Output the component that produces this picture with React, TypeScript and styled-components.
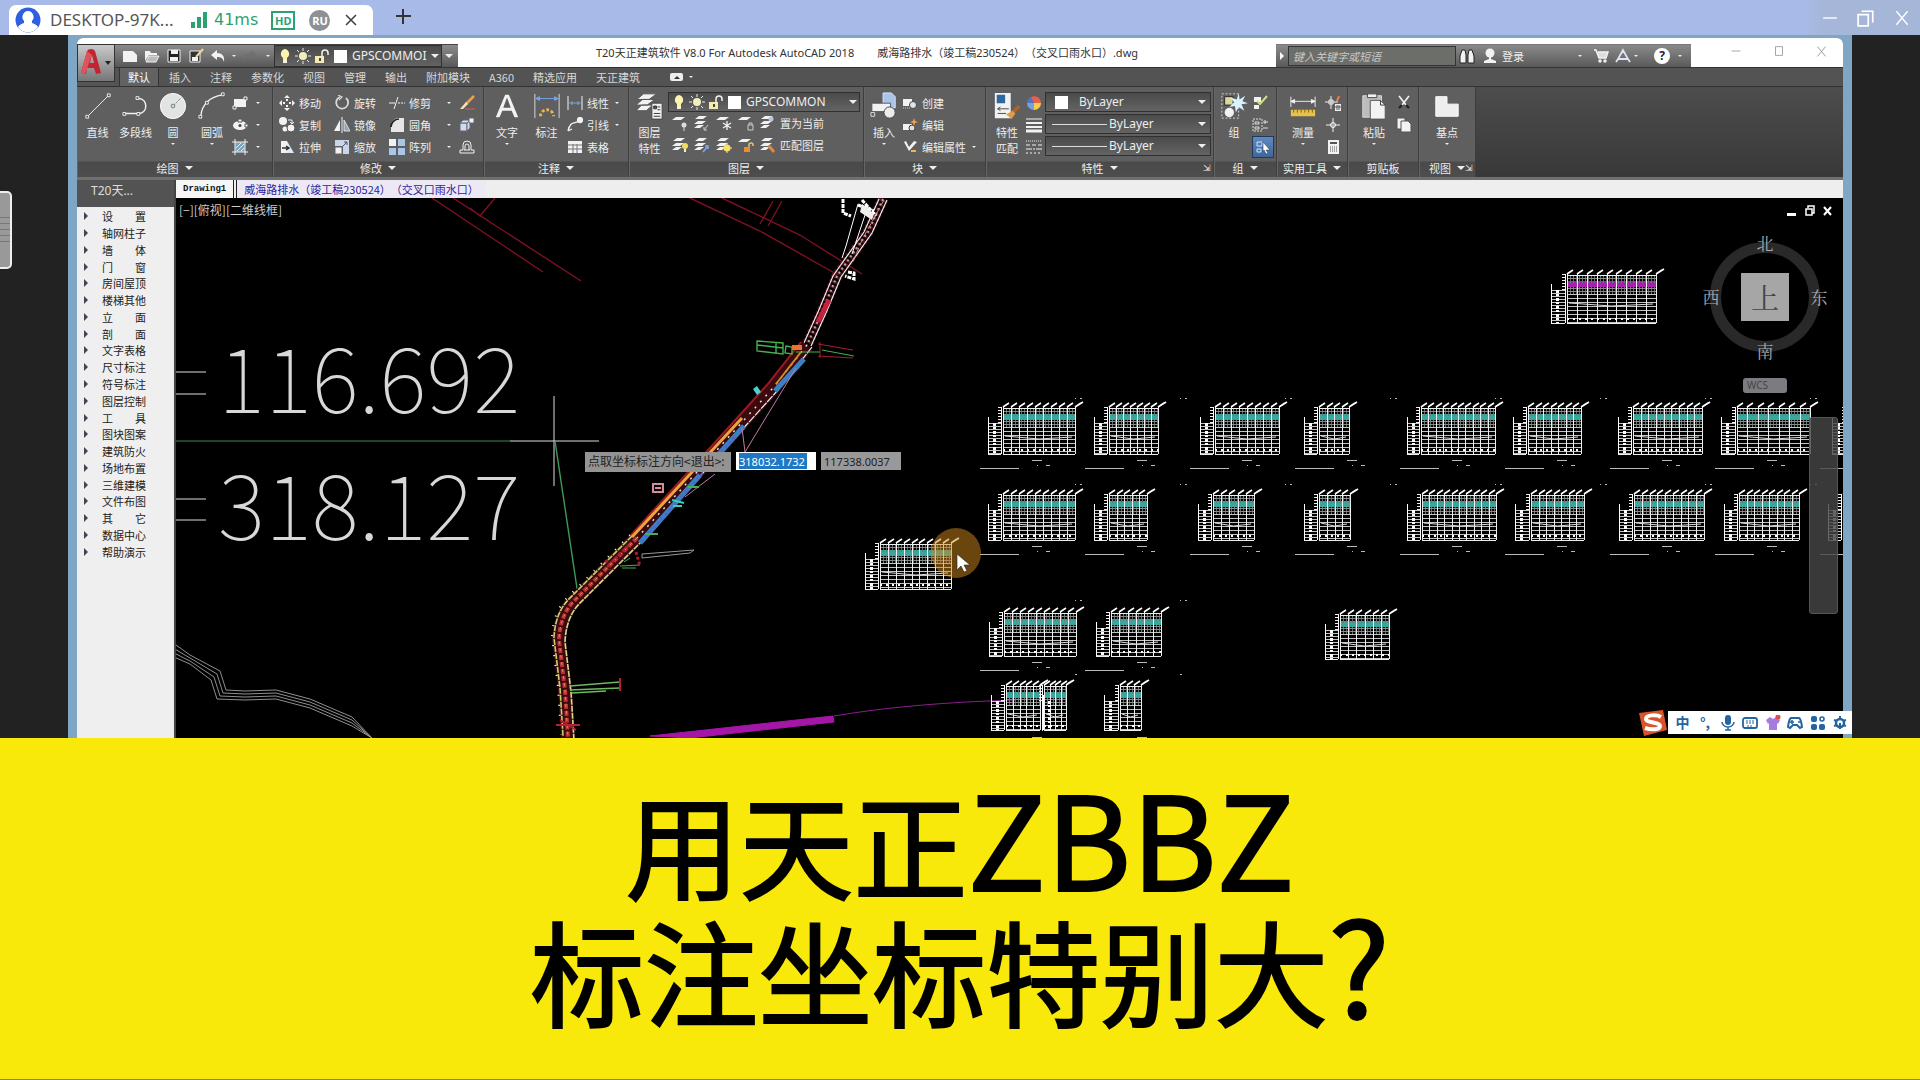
import React from "react";
import styled, { createGlobalStyle, css } from "styled-components";

const ui = `"Noto Sans", "Noto Sans CJK SC", sans-serif`;
const cjk = `"Noto Sans CJK SC", "Noto Sans", sans-serif`;

const Global = createGlobalStyle`
  *, *::before, *::after { box-sizing: border-box; }
  body { margin: 0; background: #222; font-family: ${cjk}; text-spacing-trim: space-all; }
  button, select, input { font: inherit; color: inherit; margin: 0; padding: 0; border: 0; background: none; border-radius: 0; }
  ul, h1, h2, p { margin: 0; padding: 0; list-style: none; font-weight: inherit; font-size: inherit; }
  svg { display: block; flex: none; }
`;

/* ---------- icons ---------- */
const W = "#f2f2f2";
const sheets = (
  <path d="M5 1h8L9 4H1zM4 6h8l-4 3H0zM4 10h6l-4 3H0z" fill={W} />
);
const icons: Record<string, React.ReactNode> = {
  line: <g fill="none" stroke={W}><path d="M4 26 26 4" /><path d="M2 25h3v3h-3zM25 2h3v3h-3z" fill="#555" /></g>,
  pline: <g fill="none" stroke={W}><path d="M3 23h15c10 0 10-16 0-16" strokeWidth="1.5" /><path d="M1 22h3v3h-3zM16 22h3v3h-3zM15 5h3v3h-3z" fill="#555" /></g>,
  circle: <g><circle cx="15" cy="15" r="13.5" fill="#e2e4e4" stroke="#fff" /><path d="M15 15 24 6" stroke="#888" strokeDasharray="3 1" /><circle cx="15" cy="15" r="2" fill="#ddd" stroke="#678" /></g>,
  arc: <g fill="none" stroke={W}><path d="M3 26C4 13 13 5 26 3" strokeWidth="1.4" /><path d="M1 25h3v3h-3zM25 1h3v3h-3zM8 10h3v3h-3z" fill="#555" /></g>,
  rect: <g><path d="M2 4h12v8H2z" fill={W} /><path d="M1 11h3v3h-3zM12 2h3v3h-3z" fill="#555" stroke={W} /></g>,
  ellipse: <g><ellipse cx="8" cy="8.500" rx="7" ry="4.500" fill={W} /><circle cx="8" cy="8.500" r="1.500" fill="#444" /><path d="M6 2h4v3H6zM13 7h3v3h-3z" fill={W} stroke="#555" /></g>,
  hatch: <g><path d="M3 3h10v10H3z" fill="#7fa2bb" /><path d="M3 0v16M13 0v16M0 3h16M0 13h16" stroke={W} /><path d="m4 9 5-5M5 12l7-7M9 12l3-3" stroke="#dfefff" /></g>,
  move: <g fill={W}><path d="M8 0 5 3h6zM8 16l-3-3h6zM0 8l3-3v6zM16 8l-3-3v6zM7 4h2v2H7zM7 10h2v2H7zM4 7h2v2H4zM10 7h2v2h-2z" /></g>,
  copy: <g fill={W}><circle cx="4" cy="4" r="4" /><circle cx="6" cy="12" r="2.500" /><circle cx="12" cy="11" r="4" stroke="#555" /><path d="M9 3h4v3M11 5l2 2 2-2" fill="none" stroke={W} /></g>,
  stretch: <g><path d="M2 2h6v12H2z" fill={W} /><path d="M8 2 15 14H8z" fill="#dfe7f2" /><path d="M3 9h6M7 7l3 2-3 2" stroke="#333" fill="none" strokeWidth="1.500" /></g>,
  rotate: <g fill="none" stroke="#d8d8d8" strokeWidth="1.8"><path d="M12 3a6 6 0 1 1-6-1" /><path d="M4 0l4 2-3 3" strokeWidth="1.2" /></g>,
  mirror: <g><path d="M6 3v11H0z" fill={W} /><path d="M10 3v11h6z" fill="#8fa4b4" stroke={W} strokeWidth="0.8" /><path d="M8 0v16" stroke={W} /></g>,
  scale: <g><path d="M1 1h14v14H9V7H1z" fill="#c9d6ea" /><path d="M1 8h7v7H1z" fill={W} stroke="#666" /><path d="m9 7 4-4M10 3h3v3" stroke="#456" fill="none" /></g>,
  trim: <g stroke={W} fill="none"><path d="M0 8h6M5 14 9 2" /><path d="M9 8h7" strokeDasharray="2 1" /></g>,
  fillet: <g><path d="M2 15V9a8 8 0 0 1 8-8h5v14z" fill="#e6e6e6" /><path d="M2 10a8 8 0 0 1 8-8" stroke="#222" strokeWidth="1.6" fill="none" /></g>,
  array: <g fill="#a9c6e6"><path d="M0 0h7v7H0z" fill={W} /><path d="M9 0h7v7H9zM0 9h7v7H0zM9 9h7v7H9z" /></g>,
  brush: <g><path d="m15 1-8 8" stroke="#e9a24c" strokeWidth="2.5" /><path d="m7 7-6 7h3l5-5z" fill="#f7e3c0" /><path d="M6 14h10" stroke="#e05a4a" /></g>,
  explode: <g fill="#cfdcea" stroke="#667"><path d="M1 6h7v8H1z" /><path d="m1 6 3-3h7l-3 3zM8 6l3-3v8l-3 3z" /><path d="M10 1h5v5h-5z" fill={W} /></g>,
  offset: <g fill="none" stroke={W}><path d="M1 14h14v-3h-3V6a4 4 0 0 0-8 0v5H1z" /><path d="M5 11h6M6 11V7a2 2 0 0 1 4 0v4" /></g>,
  text: <path d="M3 27 13 3h4l10 24h-4l-3-7H10l-3 7zM11 17h8L15 6z" fill={W} />,
  dim: <g><path d="M2 2v26M28 2v26" stroke="#ddd" /><path d="M3 7h24M3 7l4-2v4zM27 7l-4-2v4z" stroke="#79a5e8" fill="#79a5e8" /><path d="M8 26a7 7 0 0 1 14 0" stroke="#f0b450" strokeWidth="3" strokeDasharray="3 2" fill="none" /></g>,
  linear: <g><path d="M1 1v14M15 1v14" stroke={W} /><path d="M2 8h12M5 6v4M11 6v4" stroke="#79a5e8" /></g>,
  leader: <g fill="none" stroke={W} strokeWidth="1.3"><path d="M1 14C4 3 6 8 12 4M1 14l1-4M1 14l4-2" /><circle cx="13" cy="3" r="2.500" fill={W} /></g>,
  table: <g><path d="M1 2h14v12H1z" fill={W} /><path d="M1 6h14M1 10h14M6 5v9M10 5v9" stroke="#777" /></g>,
  layers: <g><path d="M8 2h14l-8 6H1zM7 8h13l-8 6H0zM6 14h12l-7 6H0z" fill={W} stroke="#555" /><path d="M17 12h11v17H17z" fill={W} stroke="#444" /><path d="M19 15h3v3h-3zM23 16h3M23 19h3M19 23h7M19 26h7" stroke="#333" fill="#555" /></g>,
  layOff: <g><path d="M4 2h9L9 5H0z" fill={W} /><circle cx="12" cy="10" r="2.500" fill="#ddd" /><path d="M12 12v4" stroke="#ddd" /></g>,
  layIso: <g>{sheets}<path d="m14 10-4 5M10 12v3h3" stroke="#ccc" fill="none" /></g>,
  layFreeze: <g><path d="M4 2h9L9 5H0z" fill={W} /><path d="M11 6v9M7 8l8 5M15 8l-8 5" stroke={W} strokeWidth="1.3" /></g>,
  layLock: <g><path d="M4 2h9L9 5H0z" fill={W} /><path d="M10 10h5v5h-5zM11 10V8h3v2" stroke="#ccc" fill="none" /></g>,
  layCurrent: <g>{sheets}<circle cx="11" cy="4" r="2.500" fill="#b8c8e0" /></g>,
  layOn: <g>{sheets}<circle cx="13" cy="9" r="3" fill="#f3dc62" /><path d="M13 12v3" stroke="#eee" strokeWidth="2" /></g>,
  layUniso: <g>{sheets}<path d="m9 15 5-6M11 9h3v3" stroke="#7fa8ea" fill="none" strokeWidth="1.500" /></g>,
  layThaw: <g>{sheets}<circle cx="11" cy="11" r="3.500" fill="#f6e26a" /><path d="M11 6v10M6 11h10" stroke="#f6e26a" /></g>,
  layUnlock: <g><path d="M4 2h9L9 5H0z" fill={W} /><path d="M6 10h6v5H6z" fill="#e98f32" /><path d="M11 10V8a2 2 0 0 1 4 0v1" stroke="#f0c060" fill="none" strokeWidth="1.500" /></g>,
  layMatch: <g>{sheets}<path d="m9 9 5 6" stroke="#e08a3c" strokeWidth="3" /></g>,
  bulb: <g><path d="M8 1a5 5 0 0 1 2 9v3H6v-3a5 5 0 0 1 2-9z" fill="#fbf3b0" /><path d="M6 14h4" stroke={W} strokeWidth="2" /></g>,
  sun: <g><circle cx="8" cy="8" r="4" fill="#f3eec0" /><path d="M8 0v3M8 13v3M0 8h3M13 8h3M2 2l2 2M12 12l2 2M2 14l2-2M12 4l2-2" stroke="#eee" /></g>,
  lock: <g><path d="M2 8h9v7H2z" fill="#f3ecb2" /><path d="M9 8V5a3 3 0 0 1 6 0v2" fill="none" stroke={W} strokeWidth="1.5" /><path d="M6 10h2v3H6z" fill="#444" /></g>,
  insert: <g><path d="M14 1h9l4 4v12H14z" fill="#a9c4e8" stroke="#dbe8ff" /><path d="M2 12h20v9H2z" fill={W} stroke="#555" /><circle cx="21" cy="22" r="6" fill="#ececec" stroke="#444" /><path d="M1 22h4v4H1z" fill="none" stroke="#ddd" /></g>,
  create: <g><path d="M1 4h9v7H1z" fill={W} /><circle cx="11" cy="10" r="3.500" fill="#dce4ee" stroke="#444" /><path d="M1 13h8" stroke="#ccc" strokeDasharray="1 1" /></g>,
  edit: <g><path d="M1 7h9v6H1z" fill={W} /><circle cx="10" cy="11" r="3" fill="#ddd" stroke="#444" /><path d="m12 1 1 3 3 1-3 1-1 3-1-3-3-1 3-1z" fill="#ff9c3a" /></g>,
  attr: <g><path d="m2 3 5 9 8-9-3-1-5 6-3-6z" fill={W} /><path d="M9 12h5" stroke="#f0b450" strokeWidth="2" /></g>,
  props: <g><path d="M2 1h17v27H2z" fill={W} /><path d="M4 3h9v9H4z" fill="#2f689c" /><path d="M5 18h12M5 23h9M8 16l-3 2 3 2" stroke="#444" fill="none" /><path d="m28 15-6 6" stroke="#a8642c" strokeWidth="4" /><path d="m14 24 7-4 3 3-4 6z" fill="#e39a45" /></g>,
  wheel: <g><path d="M8 8 1 8a7 7 0 0 1 4-6z" fill="#4a79c4" /><path d="M8 8 5 2a7 7 0 0 1 10 6z" fill="#e8604a" /><path d="M8 8h7a7 7 0 0 1-7 7z" fill="#f3d24a" /><path d="M8 8v7a7 7 0 0 1-7-7z" fill="#7c9de0" /></g>,
  weights: <g stroke={W}><path d="M0 2h16" /><path d="M0 6h16" strokeWidth="2" /><path d="M0 10h16" strokeWidth="2" /><path d="M0 14h16" strokeWidth="3" /></g>,
  types: <g stroke={W}><path d="M0 2h16" strokeDasharray="1 1" /><path d="M0 6h16" strokeDasharray="4 2" /><path d="M0 10h16" strokeDasharray="6 1 2 1" /><path d="M0 14h16" strokeDasharray="2 2" /></g>,
  group: <g><path d="M2 2h18v26H2z" fill="none" stroke="#ddd" strokeDasharray="2 2" /><path d="M5 5h9v9H5z" fill="#d8d8a0" stroke="#222" /><circle cx="10" cy="22" r="5" fill={W} /><path d="m20 1 1 7 6-4-3 6 6 2-7 1 3 7-6-4-3 6-1-7-6 1 5-5-4-5 7 2z" fill="#d8f2ff" /></g>,
  ungroup: <g><path d="M2 2h7v5H2zM2 10h5v4H2z" fill={W} /><path d="m15 1-7 8-3-3" stroke="#d2dc7a" strokeWidth="2" fill="none" /></g>,
  gedit: <g fill="none" stroke="#ddd"><path d="M1 2h9v12H1z" strokeDasharray="2 1" /><path d="M3 5h4v2H3zM3 10h4v2H3zM11 5h5M13 3v4M11 11h5" /></g>,
  gsel: <g><path d="M2 3h5v4H2zM2 10h4v3H2z" fill="none" stroke="#cfe3ff" /><path d="m8 3 7 8h-4l2 3-2 1-2-4-1 2z" fill="#fff" stroke="#345" strokeWidth="0.6" /></g>,
  measure: <g><path d="M2 5v11M28 5v11M2 10h26M2 10l4-2v4zM28 10l-4-2v4z" stroke={W} fill={W} /><path d="M2 19h26v7H2z" fill="#e9c14a" /><path d="M5 19v3M9 19v3M13 19v3M17 19v3M21 19v3M25 19v3" stroke="#7a5a10" /></g>,
  qsel: <g><path d="M6 1v13M0 7h13M4 5h4v4H4z" stroke={W} fill="#555" /><path d="M10 9h6v7h-6z" fill="#eee" /><path d="M12 10v5M14 10v5M10 12h6" stroke="#555" /><path d="m14 1-2 5" stroke="#f08040" strokeWidth="2" /></g>,
  point: <g stroke={W} fill="none"><path d="M8 1v14M1 8h14" /><circle cx="8" cy="8" r="2.500" fill="#aaa" /></g>,
  calc: <g><path d="M3 1h11v14H3z" fill={W} /><path d="M5 3h7v2H5z" fill="#555" /><path d="M5 8h7M5 10h7M5 12h7" stroke="#555" strokeDasharray="1 1" /></g>,
  paste: <g><path d="M3 4h20v23H3z" fill="#bcbcbc" stroke="#ddd" /><path d="M8 2h10v4H8z" fill={W} stroke="#444" /><path d="M11 9h11l5 5v15H11z" fill={W} stroke="#555" /><path d="M22 9v5h5" fill="none" stroke="#333" /></g>,
  cut: <g stroke={W} fill="none" strokeWidth="1.6"><path d="m3 1 7 9M13 1 6 10" /><path d="M10 10l3 3M6 10l-3 3" stroke="#222" strokeWidth="2.4" /></g>,
  pages: <g fill={W} stroke="#555"><path d="M1 1h8v11H1z" /><path d="M5 4h7l3 3v8H5z" /></g>,
  base: <path d="M3 5h12v8h12v13H3z" fill="#eee" stroke="#fff" />,
  neu: <path d="M1 3h10l4 4v7H1z" fill={W} />,
  open: <g fill={W}><path d="M1 3h5l1 2h6v2H5l-4 6z" /><path d="m5 8h10l-3 6H2z" fill="#bbb" stroke={W} /></g>,
  save: <g><path d="M2 2h12v12H2z" fill="#222" stroke={W} /><path d="M5 2h7v4H5zM4 9h8v4H4z" fill={W} /></g>,
  saveas: <g><path d="M2 3h10v11H2z" fill="#333" stroke={W} /><path d="M4 9h6v4H4z" fill={W} /><path d="m15 1-7 8" stroke="#f2d79a" strokeWidth="2" /></g>,
  undo: <path d="M7 2 1 7l6 5V9c4 0 6 1 7 5 1-6-2-9-7-9z" fill={W} />,
  redo: <path d="m9 2 6 5-6 5V9c-4 0-6 1-7 5-1-6 2-9 7-9z" fill="#6f6f6f" />,
  binoc: <g fill={W} stroke="#222"><path d="M1 15V8l2-6h3l1 5v8zM9 15V7l1-5h3l2 6v7z" /></g>,
  user: <g fill={W}><circle cx="8" cy="5" r="4.500" /><path d="M7 8h2v3l5 2v2H2v-2l5-2z" /></g>,
  cart: <g fill="none" stroke={W} strokeWidth="1.500"><path d="M1 2h2l3 8h7l2-6H5" fill="#ddd" /><circle cx="7" cy="13" r="1" /><circle cx="12" cy="13" r="1" /></g>,
  akey: <path d="M8 2 3 11h10zM8 2v3M3 11l-2 3M13 11l2 3" fill="none" stroke="#dfe4f4" strokeWidth="1.8" />,
  min: <path d="M3 8h10" stroke="currentColor" strokeWidth="1" fill="none" />,
  max: <path d="M4 3h8v10H4z" stroke="currentColor" strokeWidth="1" fill="none" />,
  rest: <path d="M1 5h9v10H1zM4 2h10v10" stroke="currentColor" strokeWidth="1.5" fill="none" />,
  x: <path d="m3 2 10 12M13 2 3 14" stroke="currentColor" strokeWidth="1.2" fill="none" />,
};
const Icon = ({ n, s = 16, big }: { n: string; s?: number; big?: boolean }) => (
  <svg width={s} height={s} viewBox={big ? "0 0 30 30" : "0 0 16 16"} aria-hidden="true">{icons[n]}</svg>
);
const Arrow = styled.span<{ $big?: boolean }>`
  flex: none; width: 0; height: 0;
  border: ${(p) => (p.$big ? 4 : 2)}px solid transparent;
  border-top-color: #eee; border-bottom: 0;
`;

/* ---------- remote desktop frame ---------- */
const Page = styled.div`min-height: 100vh; display: flex; flex-direction: column; background: #222;`;
const TopBar = styled.header`
  display: flex; align-items: flex-end; height: 35px; flex: none; padding-left: 9px;
  background: linear-gradient(90deg, #a8bbe8 94%, #a6b6d8 95%);
`;
const SessionTab = styled.div`
  display: flex; align-items: center; width: 364px; height: 30px; padding-left: 6px;
  background: #fff; border-radius: 7px 7px 0 0; color: #555; font: 17px/30px ${ui};
`;
const Host = styled.span`flex: none; width: 150px; padding-left: 9px;`;
const Ping = styled.span`flex: none; display: flex; align-items: center; gap: 6px; width: 80px; color: #2ca271; font: 16px/28px "DejaVu Sans", sans-serif;`;
const Hd = styled.span`padding: 0 2px; border: 2px solid #2ca271; color: #2ca271; font: bold 11px/15px "Noto Sans", sans-serif;`;
const Ru = styled.span`flex: none; margin: 0 3px 0 14px; width: 21px; height: 21px; border-radius: 50%; background: #8d9196; color: #fff; text-align: center; font: bold 11px/21px "Noto Sans", sans-serif;`;
const FrameBtn = styled.button`display: flex; align-items: center; justify-content: center; width: 36px; height: 35px; color: #fff;`;
const AddBtn = styled(FrameBtn)`margin-left: 12px; height: 38px;`;
const Spacer = styled.div`flex: 1;`;

const Stage = styled.main`position: relative; flex: 1; min-height: 0; display: flex; padding: 0 68px; background: #222; overflow: hidden;`;
const Desktop = styled.div`flex: 1; min-width: 0; display: flex; padding: 3px 9px 0; background: #7fa6c4;`;
const Handle = styled.button`
  position: absolute; left: 0; top: 156px; width: 12px; height: 78px; border: 2px solid #eee; border-left: 0; border-radius: 0 5px 5px 0;
  background: repeating-linear-gradient(#777 0 1px, transparent 1px 6px) 0 24px / 100% 28px no-repeat, #999;
`;
const Win = styled.section`flex: 1; min-width: 0; display: flex; flex-direction: column; background: #555; border-radius: 6px 6px 0 0; overflow: hidden; color: #eee; font: 11px/14px ${cjk};`;

/* ---------- title bar ---------- */
const Head = styled.div`display: flex; flex: none; border-bottom: 1px solid #333;`;
const AppCell = styled.div`padding-top: 6px; background: linear-gradient(#fff 6px, #555 6px);`;
const AppBtn = styled.button`
  display: flex; align-items: center; width: 38px; height: 38px; border: 1px solid #333;
  background: linear-gradient(#c9c9c9, #777);
`;
const DarkArrow = styled(Arrow)`border-width: 4px 3px 0; border-top-color: #222;`;
const HeadMain = styled.div`flex: 1; min-width: 0;`;
const TitleRow = styled.div`display: flex; align-items: flex-end; height: 29px; background: #fff;`;
const Quick = styled.div`
  display: flex; align-items: center; height: 23px; width: 343px; padding-left: 4px;
  background: linear-gradient(#8b8b8b, #585858); border-top: 1px solid #444;
`;
const QBtn = styled.button<{ $w?: number }>`display: flex; align-items: center; justify-content: center; width: ${(p) => p.$w || 22}px; height: 22px;`;
const LayerBox = styled.div<{ $w: number; $h: number }>`
  display: flex; align-items: center; gap: 2px; width: ${(p) => p.$w}px; height: ${(p) => p.$h}px; padding: 0 2px;
  border: 1px solid #303030; background: linear-gradient(#4b4b4b, #636363);
`;
const Swatch = styled.span`flex: none; width: 13px; height: 13px; margin: 0 3px; background: #fff;`;
const Combo = styled.select`
  flex: 1; min-width: 0; height: 100%; appearance: none; font: 12px/14px ${ui}; color: #eee; text-overflow: clip;
`;
const Title = styled.h1`flex: 1; display: flex; justify-content: center; gap: 23px; color: #333; font: 11px/28px ${ui}; white-space: nowrap;`;
const Search = styled.div`
  display: flex; align-items: center; width: 415px; height: 23px; background: linear-gradient(#8a8a8a, #5a5a5a); border-top: 1px solid #777;
`;
const SearchArrow = styled.span`width: 0; height: 0; margin: 0 4px; border: 4px solid transparent; border-left-color: #fff; border-right: 0;`;
const SearchInput = styled.input`width: 168px; height: 20px; padding: 0 4px; border: 1px solid #333; background: #6c6e6a; font-style: italic; &::placeholder { color: #c8c8c8; opacity: 1; }`;
const Login = styled.button`display: flex; align-items: center; gap: 4px; width: 104px; padding-left: 4px; margin-right: 8px; & > :last-child { margin-left: auto; }`;
const HelpBtn = styled.button`width: 16px; height: 16px; margin: 0 8px 0 16px; border-radius: 50%; background: #fff; color: #223; font: bold 12px/16px ${ui};`;
const WinBtns = styled.div`display: flex; justify-content: flex-end; gap: 29px; align-items: center; width: 152px; height: 29px; padding: 0 15px 3px 0; color: #999;`;
const MenuRow = styled.nav`display: flex; align-items: flex-end; height: 19px; padding-left: 5px; border-top: 1px solid #333; background: #535353;`;
const MenuTab = styled.button<{ $on?: boolean }>`
  height: 18px; padding: 0 8px; margin-right: 3px; line-height: 16px; color: #d8d8d8; white-space: nowrap;
  ${(p) => p.$on && css`color: #fff; background: #626262; box-shadow: 0 0 0 1px #333;`}
`;
const MenuToggle = styled.button`display: flex; align-items: center; gap: 6px; height: 18px; padding-left: 19px;`;
const Pill = styled.span`display: flex; align-items: center; justify-content: center; width: 13px; height: 8px; border-radius: 2px; background: #eee;`;
const UpTri = styled.span`width: 0; height: 0; border: 3px solid transparent; border-bottom-color: #333; border-top: 0;`;

/* ---------- ribbon ---------- */
const Ribbon = styled.div`display: flex; flex: none; height: 93px; border-bottom: 3px solid #6f6f6f; background: linear-gradient(#4d4d4d, #383838);`;
const PanelBox = styled.section<{ $w: number }>`
  display: flex; flex-direction: column; width: ${(p) => p.$w}px; height: 90px; border-right: 1px solid #3e3e3e; box-shadow: inset 1px 0 #666;
  background: linear-gradient(#5f5f5f 74px, #4a4a4a 75px, #4d4d4d);
`;
const PanelBody = styled.div<{ $pl?: number }>`display: flex; flex: 1; padding: 5px 0 0 ${(p) => p.$pl ?? 4}px;`;
const PanelTitle = styled.button`position: relative; display: flex; align-items: center; justify-content: center; gap: 6px; width: 100%; height: 18px; color: #eee; white-space: nowrap;`;
const Launch = styled.span`position: absolute; right: 2px; top: 2px; font-size: 9px;`;
const Big = styled.button<{ $w: number }>`
  display: flex; flex-direction: column; align-items: center; width: ${(p) => p.$w}px; height: 66px; gap: 3px; line-height: 16px; white-space: pre-line;
  & > svg { margin-bottom: 1px; }
`;
const Col = styled.div<{ $w: number }>`display: flex; flex-direction: column; width: ${(p) => p.$w}px;`;
const Small = styled.button<{ $on?: boolean }>`
  display: flex; align-items: center; gap: 4px; height: 22px; white-space: nowrap;
  & > i { margin-left: auto; margin-right: 8px; }
  ${(p) => p.$on && css`width: 22px; padding-left: 2px; border: 1px solid #223a5a; background: linear-gradient(#5f8ac0, #3f669c);`}
`;
const IconRow = styled.div`display: flex; align-items: center; height: 22px; gap: 6px; padding-left: 4px;`;
const PropSelect = styled.label`
  display: flex; align-items: center; height: 20px; width: 166px; margin-bottom: 2px; padding: 0 4px 0 6px; border: 1px solid #303030;
  background: linear-gradient(#4b4b4b, #636363);
`;
const Rule = styled.span`width: 55px; height: 1px; margin-right: 2px; background: #ddd;`;
const ColourCombo = styled(Combo)`padding-left: 8px;`;

const Panel = ({ w, title, arrow = true, launch, pl, children }: any) => (
  <PanelBox $w={w}>
    <PanelBody $pl={pl}>{children}</PanelBody>
    <PanelTitle>{title}{arrow && <Arrow $big />}{launch && <Launch>⇲</Launch>}</PanelTitle>
  </PanelBox>
);
const BigBtn = ({ n, w, t, a }: { n: string; w: number; t: string; a?: boolean }) => (
  <Big $w={w}><Icon n={n} s={28} big />{t}{a && <Arrow />}</Big>
);
const Cmd = ({ n, t, a, on }: { n: string; t?: string; a?: boolean; on?: boolean }) => (
  <Small $on={on} aria-label={t || n}><Icon n={n} />{t}{a && <Arrow as="i" />}</Small>
);

/* ---------- work area ---------- */
const Work = styled.div`flex: 1; min-height: 0; display: flex;`;
const Palette = styled.aside`flex: none; width: 99px; display: flex; flex-direction: column; border-right: 2px solid #444; background: #efefef; color: #222;`;
const PaletteHead = styled.h2`height: 27px; padding: 0 20px 0 14px; background: #535353; color: #ddd; font: 12px/22px ${ui};`;
const Tree = styled.ul`display: grid; grid-auto-rows: 1fr; height: 352px; margin-top: 1px;`;
const TreeItem = styled.button`
  display: flex; align-items: center; width: 100%; height: 100%; padding-left: 7px; gap: 14px;
  &::before { content: ""; border: 4px solid transparent; border-left-color: #3c4654; border-right: 0; }
`;
const TreeText = styled.span`display: flex; justify-content: space-between; width: 44px; white-space: nowrap;`;
const DocArea = styled.div`flex: 1; min-width: 0; display: flex; flex-direction: column;`;
const DocTabs = styled.div`display: flex; flex: none; height: 18px; background: #eee;`;
const DocTab = styled.button<{ $on?: boolean }>`
  padding: 0 7px; margin-right: 2px; border-right: 1px solid #222; background: #f6f6f6; color: #111; font: bold 9px/16px "Liberation Mono", monospace;
  ${(p) => p.$on && css`border-left: 1px solid #222; border-right: 0; background: #ede9f4; color: #2c1c9c; font: 11px/16px ${cjk};`}
`;
const Canvas = styled.div`position: relative; flex: 1; min-height: 0; overflow: hidden; background: #000;`;
const Drawing = styled.svg`position: absolute; inset: 0; width: 100%; height: 100%;`;
const ViewLabel = styled.div`position: absolute; left: 3px; top: 5px; display: flex; color: #ccc; font-size: 12px;`;
const MdiBtns = styled.div`position: absolute; right: 10px; top: 7px; display: flex; gap: 8px; color: #fff;`;
const Prompt = styled.div`position: absolute; left: 409px; top: 254px; display: flex; align-items: flex-start; gap: 5px; color: #222; font: 12px/18px ${cjk};`;
const PromptText = styled.label`width: 146px; height: 20px; padding-left: 3px; background: #939393; white-space: nowrap; line-height: 18px;`;
const Coord = styled.input<{ $on?: boolean }>`
  width: 80px; height: 18px; border: solid #999; border-width: 1px 9px 1px 3px; background: #999; font: 11px/16px ${ui};
  ${(p) => p.$on && css`border-color: #fff; background: #1f78c4; color: #fff;`}
`;
const Cube = styled.div`
  position: absolute; right: 15px; top: 36px; width: 126px; height: 126px; display: grid; place-items: center;
  grid-template: 18px 1fr 18px / 18px 1fr 18px; color: #aaa; font: 17px/18px "Noto Serif CJK SC", ${cjk};
  &::before { content: ""; position: absolute; inset: 8px; border: 11px solid #292929; border-radius: 50%; }
`;
const Dir = styled.button<{ $a: string }>`position: relative; grid-area: ${(p) => p.$a};`;
const Top = styled.button`position: relative; grid-area: 2 / 2; width: 48px; height: 48px; background: #a6a6a6; color: #444; font-size: 28px;`;
const Wcs = styled.button`position: absolute; right: 56px; top: 180px; width: 44px; height: 15px; padding-left: 4px; border-radius: 3px; background: #7c7c80; color: #444; text-align: left; font: 10px/15px ${ui};`;
const NavBar = styled.div`position: absolute; right: 5px; top: 219px; width: 29px; height: 197px; border: 1px solid #555; border-radius: 3px; background: rgba(70, 70, 70, 0.82);`;
const Ime = styled.div`
  position: absolute; right: 68px; bottom: 4px; display: flex; align-items: center; justify-content: space-between; height: 23px; width: 184px; padding: 0 4px 0 8px; background: #fff;
  color: #2464a0; font: bold 14px/23px ${cjk};
`;
const ImeLogo = styled.svg`margin-left: -38px;`;
const ImeBtn = styled.button`display: flex; align-items: center; justify-content: center; width: 16px; height: 20px;`;
const Banner = styled.footer`
  flex: none; padding: 40px 0 47px; border-bottom: 1px solid #8f8a20; background: #f8e90a; color: #000; text-align: center;
`;
const BannerText = styled.p`
  height: 254px; font: 400 114px/127px ${cjk}; -webkit-text-stroke: 2px #000; stroke-linejoin: round; white-space: nowrap;
`;
const Latin = styled.span`font-size: 130px; line-height: 100px;`;

/* ---------- CAD drawing ---------- */
type P = { h: number; x: number; r: number; t: number; b: number; n: number; band?: string };
const Profile = ({ h, x, r, t, b, n, band = "#3aa79e" }: P) => {
  const step = (r - x) / n;
  let cols = "", slash = "", rows = "", fine = "", side = "", ticks = "";
  for (let i = 0; i <= n; i++) {
    const c = Math.round(x + i * step);
    cols += `M${c} ${t}V${b}`;
    slash += `M${c} ${t}l6 -4`;
  }
  for (let y = t + 20; y <= b; y += 4) rows += `M${x} ${y}H${r}`;
  for (let y = t + 16; y <= b; y += 3) side += `M${h} ${y}H${x - 2}`;
  for (let c = x + 3; c < r; c += 3) fine += `M${c} ${t + 1}V${t + 20}`;
  for (let y = t; y < t + 16; y += 3) ticks += `M${x - 5} ${y}h3`;
  return (
    <g fill="none" shapeRendering="crispEdges">
      <path d={fine} stroke="#686868" />
      <rect x={x} y={t + 7} width={r - x} height="6" fill={band} />
      <path d={fine} stroke="#5f7f7c" strokeDasharray="2 4" />
      <path d={`M${x} ${t + 4}H${r}M${x} ${t + 14}H${r}M${x} ${t + 17}H${r}`} stroke="#8a8a8a" />
      <path d={rows + side} stroke="#c4c4c4" />
      <path d={`M${x} ${t + 1}H${r}M${x} ${b}H${r}M${h} ${b}H${x - 2}` + cols + ticks} stroke="#eee" />
      <path d={`M${h} ${t + 10}V${b}M${x - 2} ${t}V${b}`} stroke="#fff" />
      <path d={`M${h + 6} ${t + 16}V${b}`} stroke="#fff" strokeWidth="3" strokeDasharray="3 1 2 2" />
      <path d={`M${x} ${b - 4}H${r}`} stroke="#fff" strokeWidth="2" strokeDasharray="2 4" />
      <path d={`M${x + 2} ${t + 29}L${(x + r) / 2} ${t + 32}L${r - 3} ${t + 30}`} stroke="#ddd" shapeRendering="auto" />
      <path d={slash + `M${r} ${t}l8 -5`} stroke="#fff" strokeWidth="1.6" shapeRendering="auto" />
    </g>
  );
};
const rowOf = (t: number, b: number, a: number[][]): P[] => a.map(([h, x, r, n]) => ({ h, x, r, n, t, b }));
const profiles: P[] = [
  ...rowOf(407, 454, [[988, 1003, 1075, 9], [1094, 1109, 1158, 7], [1200, 1215, 1279, 8], [1304, 1319, 1349, 4], [1407, 1421, 1495, 10], [1513, 1528, 1581, 7], [1618, 1633, 1702, 9], [1721, 1737, 1810, 7], [1832, 1847, 1900, 6]]),
  ...rowOf(494, 540, [[988, 1003, 1075, 9], [1094, 1109, 1147, 5], [1198, 1213, 1254, 5], [1304, 1319, 1350, 4], [1407, 1422, 1496, 10], [1515, 1531, 1584, 7], [1619, 1634, 1704, 9], [1724, 1739, 1799, 8], [1828, 1843, 1900, 6]]),
  ...rowOf(612, 656, [[989, 1004, 1076, 9], [1096, 1111, 1161, 6]]),
  ...rowOf(614, 659, [[1325, 1340, 1389, 6]]),
  ...rowOf(685, 730, [[991, 1006, 1040, 5], [1104, 1120, 1141, 3]]),
  ...rowOf(543, 589, [[865, 880, 951, 9]]),
  { h: 1551, x: 1567, r: 1656, t: 274, b: 323, n: 9, band: "#a81fb0" },
];
const captions = [
  ...Array.from({ length: 9 }, (_, i) => [980 + i * 105, 468]),
  ...Array.from({ length: 9 }, (_, i) => [980 + i * 105, 554]),
  [980, 670], [1085, 670],
];
const bend = "L573 602Q560 616 559 640L565 690L568 738";
const lower = "M807 345L773 388L707 461L637 538" + bend;
const south = "M637 538" + bend;
const upper = "M883 199L868 232L837 276L822 312L807 345";
const shift = (dx: number, dy: number) => `translate(${dx} ${dy})`;

const CadDrawing = () => (
  <Drawing viewBox="176 198 1667 540" preserveAspectRatio="xMinYMin slice" aria-label="CAD drawing">
    <g fill="none" stroke="#7d1022" strokeWidth="1.4">
      <path d="M432 198L543 272M453 198L581 281M495 198L480 216L470 208M690 198L760 231L838 275M722 198L800 235L862 274M773 201L760 224M782 201L768 226" />
    </g>
    <g fill="none" stroke="#8f8f8f">
      {[0, 3, 6, 9].map((d) => <path key={d} d={`M${176 - d} ${645 + d}L190 ${655 + d}L${220 - d} ${671 + d}L${226 - d} ${690 + d}L245 ${691 + d}L276 ${690 + d}L310 ${699 + d}L352 ${717 + d}L372 738`} />)}
    </g>
    <path d="M176 372H206M176 394H206M176 499H206M176 520H206" stroke="#ddd" />
    <g fill="#d8d8d8" fontFamily="'Noto Sans CJK SC', 'Lato', sans-serif" fontWeight="100" fontSize="90">
      <text x="218" y="413">116.692</text>
      <text x="218" y="540">318.127</text>
    </g>
    <path d="M176 441H510" stroke="#3c8a4c" />
    <path d="M510 441H599M554 396V486" stroke="#ddd" />
    <path d="M555 441L578 595" stroke="#3f9a58" strokeWidth="1.4" fill="none" />

    <g fill="none">
      <path d={upper} stroke="#4a1018" strokeWidth="11" strokeDasharray="3 2" />
      <path d={upper} transform={shift(-4, 0)} stroke="#eee" strokeWidth="1.2" />
      <path d={upper} transform={shift(4, 1)} stroke="#eee" strokeWidth="1.2" />
      <path d={upper} stroke="#aaa" strokeDasharray="2 3" strokeWidth="2" />
      <path d="M829 300L818 322" stroke="#c8203c" strokeWidth="5" />
      <path d="M858 204L846 246L842 258M868 206L852 254" stroke="#fff" />
      <path d="M858 205l16 6M862 200l14 16M843 199v14l8 3M848 272l6 1v6l-9 -3" stroke="#fff" strokeWidth="3" strokeDasharray="4 1" />
      <path d="M862 204l12 10-2 6-12-8z" fill="#eee" />
      <path d="M884 200L862 240L852 264" stroke="#d88" strokeDasharray="6 3" />
      <path d={lower} stroke="#3a0a0e" strokeWidth="14" />
      <path d="M807 345L773 388L707 461L637 538" transform={shift(-6, -3)} stroke="#9a1a24" strokeWidth="2" />
      <path d="M807 345L773 388L707 461L637 538" transform={shift(5, 2)} stroke="#eee" strokeWidth="1.2" strokeDasharray="8 1" />
      <path d="M807 345L773 388L707 461L637 538" stroke="#ddd" strokeWidth="1.5" strokeDasharray="2 6" />
      <path d={south} stroke="#c03038" strokeWidth="4" strokeDasharray="5 2" />
      <path d={south} stroke="#e08a4a" strokeWidth="1" strokeDasharray="3 4" />
      <path d={south} transform={shift(-5, -2)} stroke="#c8d070" strokeWidth="1.6" strokeDasharray="6 1" />
      <path d={south} transform={shift(6, 2)} stroke="#d8d890" strokeWidth="1.6" strokeDasharray="6 1" />
      <path d={south} transform={shift(-7, -3)} stroke="#fff" strokeDasharray="1 9" strokeWidth="2" />
      <path d="M742 418L632 537" stroke="#eda53a" strokeWidth="3" />
      <path d="M801 352L776 384" stroke="#d68a2a" strokeWidth="2" />
      <path d="M804 359L775 391M744 426L718 455M700 475L640 543" stroke="#3a80c4" strokeWidth="5" />
      <path d="M735 437L642 541" stroke="#5a60c8" strokeWidth="2" strokeDasharray="3 3" />
      <path d="M796 368L745 452L742 428M715 474L685 497" stroke="#c47aa4" />
      <path d="M757 341l26 2v11l-26 -3zM757 345l26 3M776 343v10M786 346l6 1v7l-7 -1z" stroke="#46b04c" strokeWidth="1.4" />
      <path d="M792 345h10v5h-10z" fill="#e8752a" />
      <path d="M820 352h-24M822 350l32 6" stroke="#46b04c" />
      <path d="M818 344l35 6M818 356l35 2M820 342v16" stroke="#a81e30" />
      <path d="M753 389l4 -3 4 6-4 3z" fill="#4ad0c8" />
      <path d="M653 484h10v8h-10zM655 488h6" stroke="#d78aa0" strokeWidth="2" />
      <path d="M672 500l12 3M673 506h9" stroke="#3ad0b0" strokeWidth="2" />
      <path d="M688 487h11M645 534h13" stroke="#46b04c" strokeWidth="2" />
      <path d="M642 554L694 550L690 553L642 558z" stroke="#999" />
      <path d="M620 566l20 -1M624 562l6 -4M622 568h14" stroke="#46b04c" />
      <path d="M636 552l4 14M606 560l4 10M628 546l-16 16" stroke="#a81e30" strokeWidth="3" strokeDasharray="3 2" />
      <path d="M570 686L620 682M570 690L620 688M572 693L606 691" stroke="#6cb85c" strokeWidth="1.5" />
      <path d="M620 678v13M556 725h24M560 720l16 10" stroke="#b52030" strokeWidth="2" />
      <path d="M650 736L833 716L834 722L690 738z" stroke="#a416a8" fill="#a416a8" strokeWidth="1" />
      <path d="M834 716Q910 703 1015 700" stroke="#8b1f8f" />
    </g>

    {profiles.map((p, i) => <Profile key={i} {...p} />)}
    <Profile h={1043} x={1044} r={1066} t={685} b={730} n={4} />
    <g fill="none" stroke="#bbb" shapeRendering="crispEdges">
      {captions.map(([x, y], i) => (
        <path key={i} d={`M${x} ${y}h39M${x + 52} ${y - 8}h10M${x + 57} ${y - 3}h1M${x + 66} ${y - 3}h4M${x + 95} ${y - 70}h1M${x + 100} ${y - 70}h2`} />
      ))}
      <path d="M1032 737h10M1137 737h10M1075 674h2M1180 674h2" />
    </g>
    <circle cx="956" cy="553" r="25" fill="#d58a1c" fillOpacity="0.5" />
    <path d="M957 554v16l4 -4 3 6 3 -1 -3 -6h6z" fill="#fff" stroke="#222" strokeWidth="0.6" />
  </Drawing>
);

const menus = ["默认", "插入", "注释", "参数化", "视图", "管理", "输出", "附加模块", "A360", "精选应用", "天正建筑"];
const tree = ["设置", "轴网柱子", "墙体", "门窗", "房间屋顶", "楼梯其他", "立面", "剖面", "文字表格", "尺寸标注", "符号标注", "图层控制", "工具", "图块图案", "建筑防火", "场地布置", "三维建模", "文件布图", "其它", "数据中心", "帮助演示"];
const layerTools: [string, string, string[]][] = [
  ["置为当前", "layCurrent", ["layOff", "layIso", "layFreeze", "layLock"]],
  ["匹配图层", "layMatch", ["layOn", "layUniso", "layThaw", "layUnlock"]],
];

export default function App() {
  return (
    <Page>
      <Global />
      <TopBar>
        <SessionTab>
          <svg width="26" height="26" viewBox="0 0 26 26"><circle cx="13" cy="13" r="12.500" fill="#2f5fe0" /><path d="M13 4a6 6 0 0 1 4 10v2c3 1 5 2 6 4a12 12 0 0 1-20 0c1-2 3-3 6-4v-2a6 6 0 0 1 4-10z" fill="#fff" /></svg>
          <Host>DESKTOP-97K...</Host>
          <Ping><svg width="17" height="16" viewBox="0 0 17 16"><path d="M0 10h4v6H0zM6 5h4v11H6zM12 0h4v16h-4z" fill="#2ca271" /></svg>41ms</Ping>
          <Hd>HD</Hd><Ru>RU</Ru>
          <FrameBtn aria-label="Close session"><svg width="14" height="14"><path d="m2 2 10 10M12 2 2 12" stroke="#444" strokeWidth="1.6" /></svg></FrameBtn>
        </SessionTab>
        <AddBtn aria-label="New session"><svg width="15" height="15"><path d="M7 0v15M0 7h15" stroke="#333" strokeWidth="2" /></svg></AddBtn>
        <Spacer />
        <FrameBtn aria-label="Minimize"><Icon n="min" s={22} /></FrameBtn>
        <FrameBtn aria-label="Restore"><Icon n="rest" s={18} /></FrameBtn>
        <FrameBtn aria-label="Close"><Icon n="x" s={18} /></FrameBtn>
      </TopBar>

      <Stage>
        <Handle aria-label="Toggle toolbar" />
        <Desktop>
          <Win>
            <Head>
              <AppCell>
                <AppBtn aria-label="Application menu">
                  <svg width="27" height="32" viewBox="0 0 27 32"><path d="M3 26 9 4q1-2 4-2t4 2l6 22-5 1-2-6h-7l-1 6zM12 16h4L14 8z" fill="#c22432" /><path d="M9 4 3 26l4 1L14 8z" fill="#e0535c" /></svg>
                  <DarkArrow />
                </AppBtn>
              </AppCell>
              <HeadMain>
                <TitleRow>
                  <Quick>
                    {["neu", "open", "save", "saveas", "undo"].map((n) => <QBtn key={n} aria-label={n}><Icon n={n} /></QBtn>)}
                    <QBtn $w={10} aria-label="Undo list"><Arrow /></QBtn>
                    <QBtn aria-label="Redo"><Icon n="redo" /></QBtn>
                    <QBtn $w={13} aria-label="Redo list"><Arrow /></QBtn>
                    <LayerBox $w={168} $h={22}>
                      <Icon n="bulb" /><Icon n="sun" /><Icon n="lock" /><Swatch />
                      <Combo aria-label="Current layer"><option>GPSCOMMOI</option></Combo><Arrow $big />
                    </LayerBox>
                    <QBtn $w={14} aria-label="Customize"><Arrow $big /></QBtn>
                  </Quick>
                  <Title><span>T20天正建筑软件 V8.0 For Autodesk AutoCAD 2018</span><span>威海路排水（竣工稿230524）（交叉口雨水口）.dwg</span></Title>
                  <Search>
                    <SearchArrow />
                    <SearchInput aria-label="Search" placeholder="键入关键字或短语" />
                    <QBtn aria-label="Find"><Icon n="binoc" /></QBtn>
                    <Login><Icon n="user" />登录<Arrow /></Login>
                    <QBtn aria-label="Store"><Icon n="cart" /></QBtn>
                    <QBtn aria-label="Exchange"><Icon n="akey" /></QBtn>
                    <Arrow />
                    <HelpBtn>?</HelpBtn>
                    <Arrow />
                  </Search>
                  <WinBtns>
                    <button aria-label="Minimize window"><Icon n="min" s={14} /></button>
                    <button aria-label="Maximize window"><Icon n="max" s={14} /></button>
                    <button aria-label="Close window"><Icon n="x" s={13} /></button>
                  </WinBtns>
                </TitleRow>
                <MenuRow>
                  {menus.map((m, i) => <MenuTab key={m} $on={i === 0}>{m}</MenuTab>)}
                  <MenuToggle aria-label="Minimize ribbon"><Pill><UpTri /></Pill><Arrow /></MenuToggle>
                </MenuRow>
              </HeadMain>
            </Head>

            <Ribbon>
              <Panel w={196} title="绘图" pl={1}>
                <BigBtn n="line" w={39} t="直线" /><BigBtn n="pline" w={37} t="多段线" /><BigBtn n="circle" w={38} t="圆" a /><BigBtn n="arc" w={40} t="圆弧" a />
                <Col $w={36}><Cmd n="rect" a /><Cmd n="ellipse" a /><Cmd n="hatch" a /></Col>
              </Panel>
              <Panel w={211} title="修改" pl={6}>
                <Col $w={55}><Cmd n="move" t="移动" /><Cmd n="copy" t="复制" /><Cmd n="stretch" t="拉伸" /></Col>
                <Col $w={55}><Cmd n="rotate" t="旋转" /><Cmd n="mirror" t="镜像" /><Cmd n="scale" t="缩放" /></Col>
                <Col $w={70}><Cmd n="trim" t="修剪" a /><Cmd n="fillet" t="圆角" a /><Cmd n="array" t="阵列" a /></Col>
                <Col $w={20}><Cmd n="brush" /><Cmd n="explode" /><Cmd n="offset" /></Col>
              </Panel>
              <Panel w={145} title="注释">
                <BigBtn n="text" w={38} t="文字" a /><BigBtn n="dim" w={41} t="标注" />
                <Col $w={60}><Cmd n="linear" t="线性" a /><Cmd n="leader" t="引线" a /><Cmd n="table" t="表格" /></Col>
              </Panel>
              <Panel w={235} title="图层" pl={2}>
                <BigBtn n="layers" w={37} t={"图层\n特性"} />
                <Col $w={193}>
                  <LayerBox $w={192} $h={20}>
                    <Icon n="bulb" /><Icon n="sun" /><Icon n="lock" /><Swatch />
                    <Combo aria-label="Layer"><option>GPSCOMMON</option></Combo><Arrow $big />
                  </LayerBox>
                  {layerTools.map(([t, icon, tools]) => (
                    <IconRow key={t}>
                      {tools.map((n) => <Cmd key={n} n={n} />)}
                      <Cmd n={icon} t={t} />
                    </IconRow>
                  ))}
                </Col>
              </Panel>
              <Panel w={122} title="块" pl={2}>
                <BigBtn n="insert" w={36} t="插入" a />
                <Col $w={82}><Cmd n="create" t="创建" /><Cmd n="edit" t="编辑" /><Cmd n="attr" t="编辑属性" a /></Col>
              </Panel>
              <Panel w={228} title="特性" launch pl={2}>
                <BigBtn n="props" w={38} t={"特性\n匹配"} />
                <Col $w={19}><Cmd n="wheel" /><Cmd n="weights" /><Cmd n="types" /></Col>
                <Col $w={167}>
                  <PropSelect><Swatch /><ColourCombo aria-label="Colour"><option>ByLayer</option></ColourCombo><Arrow $big /></PropSelect>
                  <PropSelect><Rule /><Combo aria-label="Lineweight"><option>ByLayer</option></Combo><Arrow $big /></PropSelect>
                  <PropSelect><Rule /><Combo aria-label="Linetype"><option>ByLayer</option></Combo><Arrow $big /></PropSelect>
                </Col>
              </Panel>
              <Panel w={63} title="组" pl={2}>
                <BigBtn n="group" w={36} t="组" />
                <Col $w={22}><Cmd n="ungroup" /><Cmd n="gedit" /><Cmd n="gsel" on /></Col>
              </Panel>
              <Panel w={71} title="实用工具">
                <BigBtn n="measure" w={44} t="测量" a />
                <Col $w={22}><Cmd n="qsel" /><Cmd n="point" /><Cmd n="calc" /></Col>
              </Panel>
              <Panel w={71} title="剪贴板" arrow={false}>
                <BigBtn n="paste" w={44} t="粘贴" a />
                <Col $w={22}><Cmd n="cut" /><Cmd n="pages" /></Col>
              </Panel>
              <Panel w={57} title="视图" launch>
                <BigBtn n="base" w={48} t="基点" a />
              </Panel>
            </Ribbon>

            <Work>
              <Palette>
                <PaletteHead>T20天...</PaletteHead>
                <Tree>
                  {tree.map((t) => (
                    <li key={t}><TreeItem><TreeText>{t.length === 2 ? <><span>{t[0]}</span><span>{t[1]}</span></> : t}</TreeText></TreeItem></li>
                  ))}
                </Tree>
              </Palette>
              <DocArea>
                <DocTabs><DocTab>Drawing1</DocTab><DocTab $on>威海路排水（竣工稿230524）（交叉口雨水口）</DocTab></DocTabs>
                <Canvas>
                  <CadDrawing />
                  <ViewLabel><button>[−]</button><button>[俯视]</button><button>[二维线框]</button></ViewLabel>
                  <MdiBtns>
                    <button aria-label="Minimize drawing"><svg width="10" height="12"><path d="M0 8h9v3H0z" fill="#fff" /></svg></button>
                    <button aria-label="Restore drawing"><svg width="10" height="12"><path d="M1 4h6v6H1zM3 3V1h6v7H7" stroke="#fff" strokeWidth="1.5" fill="none" /></svg></button>
                    <button aria-label="Close drawing"><svg width="10" height="12"><path d="m1 2 7 8M8 2 1 10" stroke="#fff" strokeWidth="2" /></svg></button>
                  </MdiBtns>
                  <Prompt>
                    <PromptText htmlFor="cx">点取坐标标注方向&lt;退出&gt;:</PromptText>
                    <Coord id="cx" $on defaultValue="318032.1732" />
                    <Coord aria-label="Y" defaultValue="117338.0037" />
                  </Prompt>
                  <Cube><Dir $a="1 / 2">北</Dir><Dir $a="2 / 1">西</Dir><Top>上</Top><Dir $a="2 / 3">东</Dir><Dir $a="3 / 2">南</Dir></Cube>
                  <Wcs>WCS</Wcs>
                  <NavBar />
                </Canvas>
              </DocArea>
            </Work>
          </Win>
        </Desktop>
        <Ime>
          <ImeLogo width="30" height="28" viewBox="0 0 30 28"><path d="M1 4 25 1l4 20-23 6z" fill="#d8542a" /><path d="M23 8c-5-3-15-2-15 2s14 3 14 7-9 4-15 2" fill="none" stroke="#fff" strokeWidth="4" /></ImeLogo>
          <ImeBtn>中</ImeBtn>
          <ImeBtn>°,</ImeBtn>
          <ImeBtn aria-label="Voice"><svg width="14" height="16" viewBox="0 0 14 16"><rect x="4" y="0" width="6" height="10" rx="3" fill="#2464a0" /><path d="M1 7a6 5 0 0 0 12 0M7 12v3M4 15h6" fill="none" stroke="#2464a0" strokeWidth="1.5" /></svg></ImeBtn>
          <ImeBtn aria-label="Keyboard"><svg width="16" height="12" viewBox="0 0 16 12"><rect x="1" y="1" width="14" height="10" rx="2" fill="none" stroke="#2464a0" strokeWidth="1.8" /><path d="M4 4h9M4 6h9M5 9h6" stroke="#2464a0" strokeDasharray="2 1" /></svg></ImeBtn>
          <ImeBtn aria-label="Skin"><svg width="16" height="16" viewBox="0 0 16 16"><path d="m1 5 4-3 3 2 3-2 4 3-2 4-1-1v7H4V8L3 9z" fill="#a67ae0" /><circle cx="13" cy="2" r="2.500" fill="#e0504a" /></svg></ImeBtn>
          <ImeBtn aria-label="Games"><svg width="16" height="14" viewBox="0 0 16 14"><path d="M4 2h8q2 1 3 9l-2 1-3-3H6l-3 3-2-1Q2 3 4 2z" fill="#fff" stroke="#2464a0" strokeWidth="2" /><path d="M5 4v4M3 6h4M11 6h2" stroke="#2464a0" strokeWidth="1.5" /></svg></ImeBtn>
          <ImeBtn aria-label="Toolbox"><svg width="14" height="14" viewBox="0 0 14 14"><g fill="#2464a0"><rect width="6" height="6" rx="2" /><rect x="9" y="1" width="4" height="4" rx="2" fill="none" stroke="#2464a0" strokeWidth="1.6" /><rect y="8" width="6" height="6" rx="2" /><rect x="8" y="8" width="6" height="6" rx="2" /></g></svg></ImeBtn>
          <ImeBtn aria-label="Settings"><svg width="14" height="14" viewBox="0 0 14 14"><circle cx="7" cy="7" r="4" fill="none" stroke="#2464a0" strokeWidth="2.5" /><path d="M7 0v3M7 7v6M1 4l3 1M10 9l3 1M1 10l3-1M10 5l3-1" stroke="#2464a0" strokeWidth="2" /></svg></ImeBtn>
        </Ime>
      </Stage>

      <Banner>
        <BannerText>用天正<Latin>ZBBZ</Latin><br />标注坐标特别大<Latin>?</Latin></BannerText>
      </Banner>
    </Page>
  );
}
